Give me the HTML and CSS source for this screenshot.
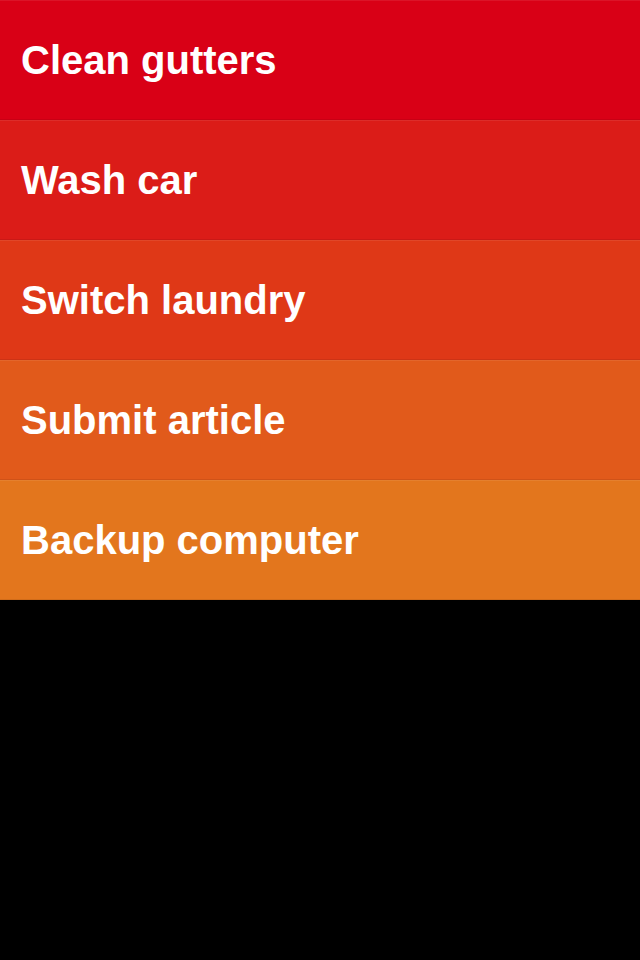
FILE: index.html
```html
<!DOCTYPE html>
<html>
<head>
    <title>Clear</title>
    <link rel="stylesheet" href="styles.css">
</head>
<body>
    <div id="list">
        <div class="item item-1">Clean gutters</div>
        <div class="item item-2">Wash car</div>
        <div class="item item-3">Switch laundry</div>
        <div class="item item-4">Submit article</div>
        <div class="item item-5">Backup computer</div>
    </div>
</body>
</html>
```

FILE: styles.css
```css
html, body {
    margin: 0;
    padding: 0;
    background-color: #000;
    height: 100%;
}

body {
    font-family: "Liberation Sans", Arial, sans-serif;
}

#list {
    display: flex;
    flex-direction: column;
}

.item {
    height: 118px;
    display: flex;
    align-items: center;
    padding: 0 21px;
    color: #fff;
    font-size: 40px;
    font-weight: bold;
    line-height: 1;
    border-top: 1px solid rgba(255, 255, 255, 0.08);
    border-bottom: 1px solid rgba(0, 0, 0, 0.08);
}

.item-1 { background-color: #d90016; }
.item-2 { background-color: #db1c18; }
.item-3 { background-color: #df3817; }
.item-4 { background-color: #e15a1b; }
.item-5 { background-color: #e3761d; }
```
